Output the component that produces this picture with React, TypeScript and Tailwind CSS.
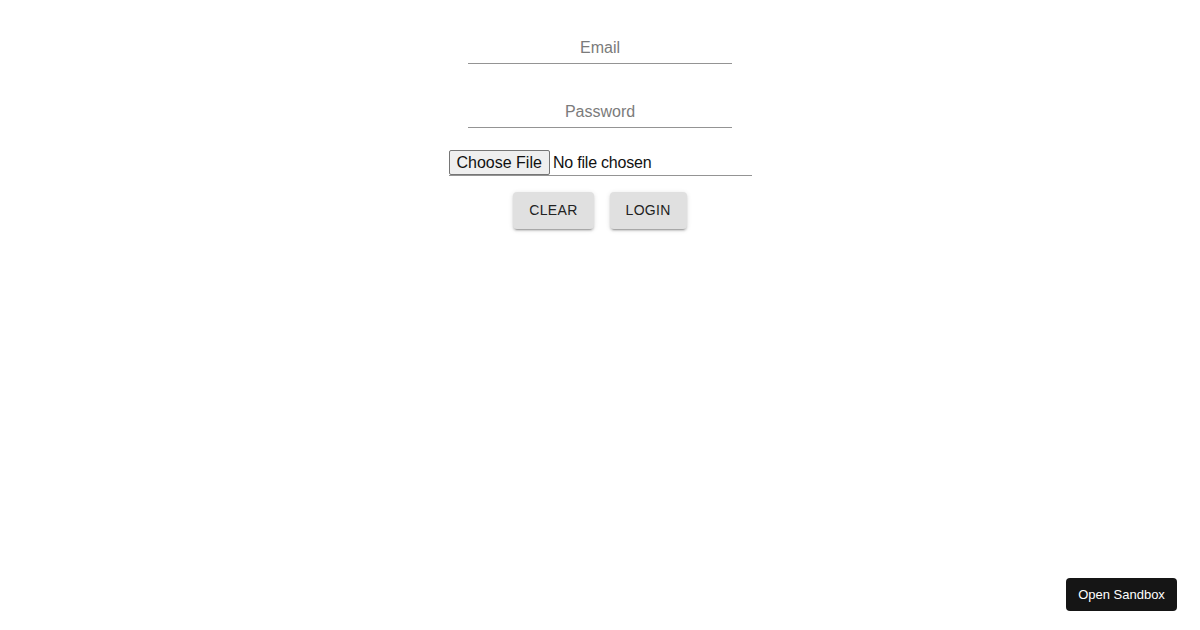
import { useState } from "react"

const font = { fontFamily: '"Liberation Sans", Arial, sans-serif' }

export default function App() {
  const [email, setEmail] = useState("")
  const [password, setPassword] = useState("")

  const clear = () => {
    setEmail("")
    setPassword("")
  }

  return (
    <div style={font} className="relative h-[630px] w-full bg-white text-black">
      <form className="flex flex-col items-center pt-[35px]">
        <input
          type="email"
          value={email}
          onChange={(e) => setEmail(e.target.value)}
          placeholder="Email"
          className="h-[29px] w-[264px] border-b border-[#949494] pb-[2px] text-center text-base text-[#222] outline-none placeholder:text-[#7b7b7b]"
        />

        <input
          type="password"
          value={password}
          onChange={(e) => setPassword(e.target.value)}
          placeholder="Password"
          className="mt-[35px] h-[29px] w-[264px] border-b border-[#949494] pb-[2px] text-center text-base text-[#222] outline-none placeholder:text-[#7b7b7b]"
        />

        <input
          type="file"
          className="mt-[22px] h-[26px] w-[303px] border-b border-[#949494] text-base leading-[24px] tracking-[-0.2px] text-[#111] file:mr-[3px] file:h-[25px] file:rounded-[2px] file:border file:border-[#767676] file:bg-[#efefef] file:px-[7px] file:text-base file:tracking-normal file:text-[#111]"
        />

        <div className="mt-4 flex gap-4">
          <button
            type="button"
            onClick={clear}
            className="h-[37px] min-w-16 rounded bg-[#e0e0e0] px-4 pb-[2px] text-sm uppercase tracking-[0.3px] text-[#222] shadow-[0_3px_1px_-2px_rgba(0,0,0,0.2),0_2px_2px_0_rgba(0,0,0,0.14),0_1px_5px_0_rgba(0,0,0,0.12)]"
          >
            Clear
          </button>
          <button
            type="button"
            className="h-[37px] min-w-16 rounded bg-[#e0e0e0] px-4 pb-[2px] text-sm uppercase tracking-[0.3px] text-[#222] shadow-[0_3px_1px_-2px_rgba(0,0,0,0.2),0_2px_2px_0_rgba(0,0,0,0.14),0_1px_5px_0_rgba(0,0,0,0.12)]"
          >
            Login
          </button>
        </div>
      </form>

      <button
        type="button"
        className="absolute bottom-[19px] right-[23px] h-[33px] w-[111px] rounded-[4px] bg-[#151515] text-[13px] text-white"
      >
        Open Sandbox
      </button>
    </div>
  )
}
